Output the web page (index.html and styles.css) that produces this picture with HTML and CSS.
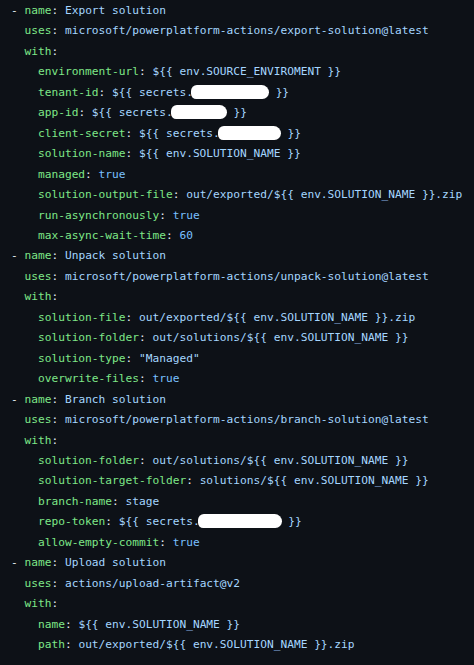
FILE: index.html
```html
<!DOCTYPE html>
<html lang="en">
<head>
    <meta charset="UTF-8">
    <meta name="viewport" content="width=device-width, initial-scale=1.0">
    <title>workflow.yml</title>
    <link rel="stylesheet" href="styles.css">
</head>
<body>
    <!-- YAML kod bloğu -->
    <div class="code">
        <div class="line"><span class="p">- </span><span class="k">name</span><span class="p">: </span><span class="s">Export solution</span></div>
        <div class="line">  <span class="k">uses</span><span class="p">: </span><span class="s">microsoft/powerplatform-actions/export-solution@latest</span></div>
        <div class="line">  <span class="k">with</span><span class="p">:</span></div>
        <div class="line">    <span class="k">environment-url</span><span class="p">: </span><span class="s">${{ env.SOURCE_ENVIROMENT }}</span></div>
        <div class="line">    <span class="k">tenant-id</span><span class="p">: </span><span class="s">${{ secrets.<span class="redact w-tenant"></span> }}</span></div>
        <div class="line">    <span class="k">app-id</span><span class="p">: </span><span class="s">${{ secrets.<span class="redact w-app"></span> }}</span></div>
        <div class="line">    <span class="k">client-secret</span><span class="p">: </span><span class="s">${{ secrets.<span class="redact w-client"></span> }}</span></div>
        <div class="line">    <span class="k">solution-name</span><span class="p">: </span><span class="s">${{ env.SOLUTION_NAME }}</span></div>
        <div class="line">    <span class="k">managed</span><span class="p">: </span><span class="c">true</span></div>
        <div class="line">    <span class="k">solution-output-file</span><span class="p">: </span><span class="s">out/exported/${{ env.SOLUTION_NAME }}.zip</span></div>
        <div class="line">    <span class="k">run-asynchronously</span><span class="p">: </span><span class="c">true</span></div>
        <div class="line">    <span class="k">max-async-wait-time</span><span class="p">: </span><span class="c">60</span></div>
        <div class="line"><span class="p">- </span><span class="k">name</span><span class="p">: </span><span class="s">Unpack solution</span></div>
        <div class="line">  <span class="k">uses</span><span class="p">: </span><span class="s">microsoft/powerplatform-actions/unpack-solution@latest</span></div>
        <div class="line">  <span class="k">with</span><span class="p">:</span></div>
        <div class="line">    <span class="k">solution-file</span><span class="p">: </span><span class="s">out/exported/${{ env.SOLUTION_NAME }}.zip</span></div>
        <div class="line">    <span class="k">solution-folder</span><span class="p">: </span><span class="s">out/solutions/${{ env.SOLUTION_NAME }}</span></div>
        <div class="line">    <span class="k">solution-type</span><span class="p">: </span><span class="s">"Managed"</span></div>
        <div class="line">    <span class="k">overwrite-files</span><span class="p">: </span><span class="c">true</span></div>
        <div class="line"><span class="p">- </span><span class="k">name</span><span class="p">: </span><span class="s">Branch solution</span></div>
        <div class="line">  <span class="k">uses</span><span class="p">: </span><span class="s">microsoft/powerplatform-actions/branch-solution@latest</span></div>
        <div class="line">  <span class="k">with</span><span class="p">:</span></div>
        <div class="line">    <span class="k">solution-folder</span><span class="p">: </span><span class="s">out/solutions/${{ env.SOLUTION_NAME }}</span></div>
        <div class="line">    <span class="k">solution-target-folder</span><span class="p">: </span><span class="s">solutions/${{ env.SOLUTION_NAME }}</span></div>
        <div class="line">    <span class="k">branch-name</span><span class="p">: </span><span class="s">stage</span></div>
        <div class="line">    <span class="k">repo-token</span><span class="p">: </span><span class="s">${{ secrets.<span class="redact w-repo"></span> }}</span></div>
        <div class="line">    <span class="k">allow-empty-commit</span><span class="p">: </span><span class="c">true</span></div>
        <div class="line"><span class="p">- </span><span class="k">name</span><span class="p">: </span><span class="s">Upload solution</span></div>
        <div class="line">  <span class="k">uses</span><span class="p">: </span><span class="s">actions/upload-artifact@v2</span></div>
        <div class="line">  <span class="k">with</span><span class="p">:</span></div>
        <div class="line">    <span class="k">name</span><span class="p">: </span><span class="s">${{ env.SOLUTION_NAME }}</span></div>
        <div class="line">    <span class="k">path</span><span class="p">: </span><span class="s">out/exported/${{ env.SOLUTION_NAME }}.zip</span></div>
    </div>
</body>
</html>
```

FILE: styles.css
```css
/* Genel ayarlar */
body {
    margin: 0;
    background-color: #0d1117; /* koyu arka plan */
    height: 665px;
    overflow: hidden;
}
.code {
    padding: 1px 0 0 11px;
    font-family: "DejaVu Sans Mono", "Liberation Mono", monospace;
    font-size: 11.2px;
    line-height: 20.45px;
    color: #e6edf3;
}
.line {
    white-space: pre;
}
.k { color: #7ee787; } /* anahtar */
.p { color: #e6edf3; } /* noktalama */
.s { color: #a5d6ff; } /* metin */
.c { color: #79c0ff; } /* sabit */

/* gizlenmiş sırlar */
.redact {
    display: inline-block;
    height: 14px;
    vertical-align: -3px;
    background-color: #ffffff;
    border-radius: 8px 10px 9px 7px;
    margin-left: -2px;
}
.w-tenant { width: 78px; }
.w-app { width: 56px; }
.w-client { width: 63px; }
.w-repo { width: 84px; }
```
